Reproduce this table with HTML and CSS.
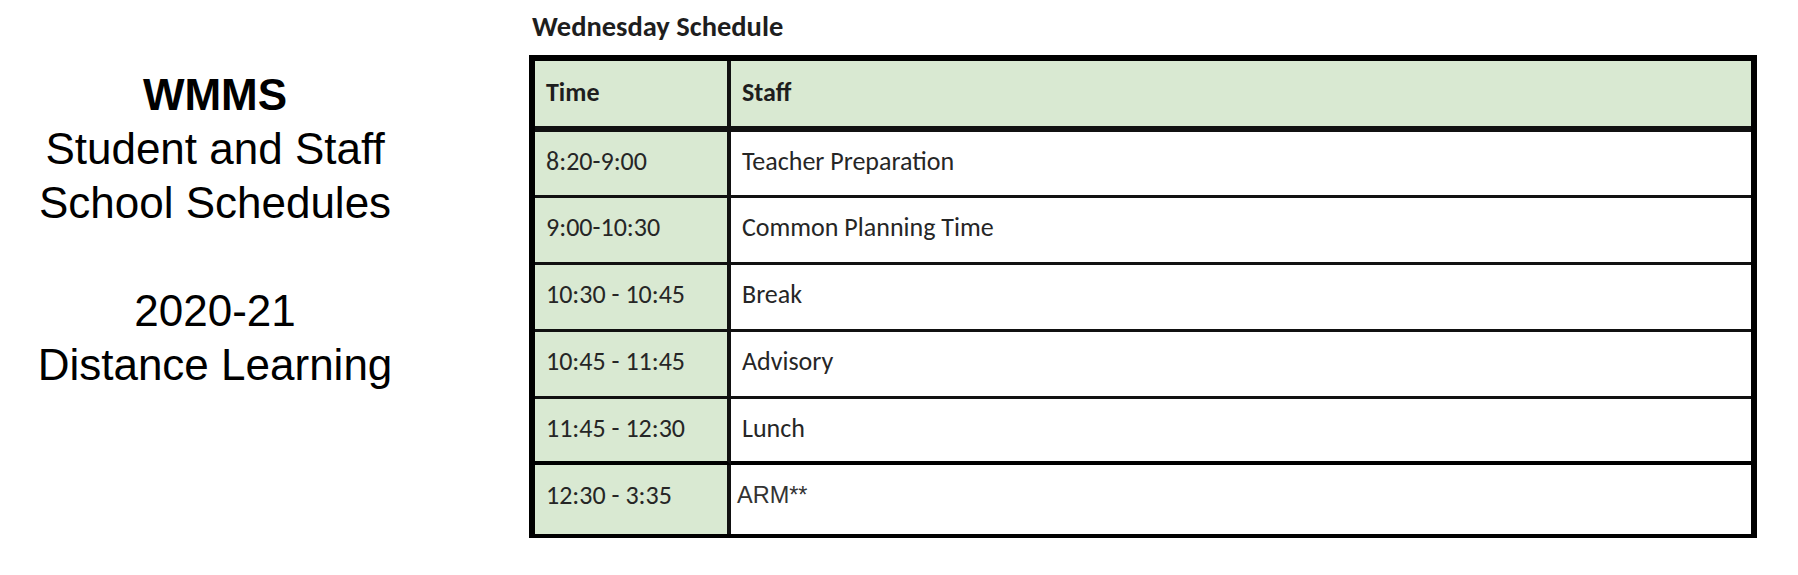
FILE: index.html
```html
<!DOCTYPE html>
<html lang="en">
<head>
<meta charset="utf-8">
<title>WMMS Wednesday Schedule</title>
<link rel="stylesheet" href="styles.css">
</head>
<body>
<main class="page">
  <section class="intro">
    <div class="intro-line intro-strong">WMMS</div>
    <div class="intro-line">Student and Staff</div>
    <div class="intro-line">School Schedules</div>
    <div class="intro-line intro-blank">&nbsp;</div>
    <div class="intro-line">2020-21</div>
    <div class="intro-line">Distance Learning</div>
  </section>
  <section class="schedule">
    <h1 class="schedule-title">Wednesday Schedule</h1>
    <div class="grid">
      <div class="cell time head">Time</div>
      <div class="cell staff head">Staff</div>

      <div class="cell time r1">8:20-9:00</div>
      <div class="cell staff r1">Teacher Preparation</div>

      <div class="cell time r2">9:00-10:30</div>
      <div class="cell staff r2">Common Planning Time</div>

      <div class="cell time r3">10:30 - 10:45</div>
      <div class="cell staff r3">Break</div>

      <div class="cell time r4">10:45 - 11:45</div>
      <div class="cell staff r4">Advisory</div>

      <div class="cell time r5">11:45 - 12:30</div>
      <div class="cell staff r5">Lunch</div>

      <div class="cell time r6">12:30 - 3:35</div>
      <div class="cell staff r6 arm">ARM**</div>
    </div>
  </section>
</main>
</body>
</html>
```
FILE: styles.css
```css
* { box-sizing: border-box; }

html, body {
  margin: 0;
  padding: 0;
  background: #ffffff;
}

.page {
  display: flex;
  align-items: flex-start;
  width: 1798px;
  height: 575px;
}

.intro {
  width: 430px;
  padding-top: 68px;
  text-align: center;
  font-family: "Liberation Sans", Arial, sans-serif;
  font-size: 44px;
  line-height: 54px;
  color: #000;
}

.intro-strong { font-weight: bold; }

.schedule {
  margin-left: 99px;
  width: 1228px;
}

.schedule-title {
  margin: 0 0 13px 3px;
  padding-top: 11px;
  font-family: "Carlito", "Lato", sans-serif;
  font-weight: bold;
  font-size: 28.5px;
  line-height: 31px;
  color: #1e1e1e;
}

.grid {
  display: grid;
  grid-template-columns: 196px 1fr;
  grid-template-rows: 71px 66px 67px 67px 67px 66px 69px;
  border: 6px solid #000;
  border-bottom-width: 4px;
  font-family: "Carlito", "Lato", sans-serif;
  font-size: 26px;
  line-height: 30px;
  color: #262626;
}

.cell {
  padding-top: 14px;
  border-bottom: 3px solid #111;
}

.time {
  background: #d9e9d2;
  border-right: 4px solid #111;
  padding-left: 11px;
}

.staff {
  background: #fff;
  padding-left: 11px;
}

.head {
  background: #d9e9d2;
  font-weight: bold;
  border-bottom-width: 6px;
  padding-top: 16px;
  color: #1e1e1e;
}

.r5 { border-bottom-width: 4px; border-bottom-color: #000; }

.r6 {
  border-bottom: none;
  padding-top: 15px;
}

.arm {
  padding-left: 6px;
  font-family: "Liberation Sans", Arial, sans-serif;
  font-size: 23.5px;
  color: #333;
}
```
